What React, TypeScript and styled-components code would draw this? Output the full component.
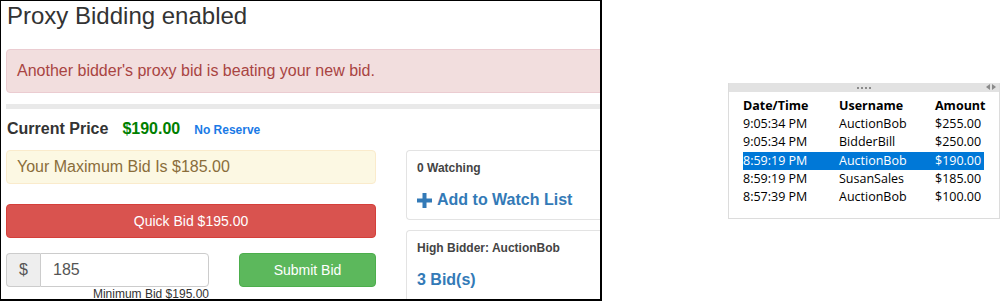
import React, { FC } from 'react';
import styled, { createGlobalStyle } from 'styled-components';

const GlobalStyle = createGlobalStyle`
  html, body {
    margin: 0;
    padding: 0;
    background: #fff;
  }
  body {
    font-family: 'Liberation Sans', Arial, sans-serif;
    color: #333;
  }
`;

interface BidRow {
  time: string;
  user: string;
  amount: string;
  selected?: boolean;
}

const bids: BidRow[] = [
  { time: '9:05:34 PM', user: 'AuctionBob', amount: '$255.00' },
  { time: '9:05:34 PM', user: 'BidderBill', amount: '$250.00' },
  { time: '8:59:19 PM', user: 'AuctionBob', amount: '$190.00', selected: true },
  { time: '8:59:19 PM', user: 'SusanSales', amount: '$185.00' },
  { time: '8:57:39 PM', user: 'AuctionBob', amount: '$100.00' },
];

const Page = styled.div`
  display: flex;
  align-items: flex-start;
  width: 1000px;
  height: 302px;
`;

const Frame = styled.div`
  box-sizing: border-box;
  width: 602px;
  height: 301px;
  border-top: 1px solid #000;
  border-left: 1px solid #000;
  border-right: 2px solid #000;
  border-bottom: 2px solid #000;
  overflow: hidden;
  flex-shrink: 0;
`;

const Inner = styled.div`
  width: 660px;
  padding-left: 5px;
`;

const Title = styled.h1`
  margin: 0;
  padding-top: 1px;
  font-size: 24px;
  font-weight: 400;
  line-height: 28px;
  padding-left: 1px;
  color: #333;
`;

const Alert = styled.div<{ kind: 'danger' | 'warning' }>`
  box-sizing: border-box;
  border: 1px solid ${p => (p.kind === 'danger' ? '#ebccd1' : '#faebcc')};
  background: ${p => (p.kind === 'danger' ? '#f2dede' : '#fcf8e3')};
  color: ${p => (p.kind === 'danger' ? '#a94442' : '#8a6d3b')};
  border-radius: 4px;
  font-size: 16px;
  line-height: 20px;
  padding: 0 10px;
  display: flex;
  align-items: center;
`;

const DangerAlert = styled(Alert)`
  margin-top: 19px;
  height: 44px;
`;

const Divider = styled.div`
  margin-top: 11px;
  height: 5px;
  background: #e9e9e9;
`;

const PriceRow = styled.div`
  display: flex;
  align-items: baseline;
  height: 20px;
  margin-top: 11px;
  padding-left: 1px;
`;

const PriceLabel = styled.span`
  font-size: 16px;
  font-weight: 700;
  color: #333;
`;

const PriceValue = styled.span`
  font-size: 16px;
  font-weight: 700;
  color: #008000;
  margin-left: 14px;
`;

const Reserve = styled.span`
  font-size: 12px;
  font-weight: 700;
  color: #1a7ae6;
  margin-left: 14px;
`;

const Columns = styled.div`
  display: grid;
  grid-template-columns: 370px 1fr;
  column-gap: 30px;
  margin-top: 10px;
`;

const LeftCol = styled.div`
  display: flex;
  flex-direction: column;
`;

const MaxBid = styled(Alert)`
  height: 34px;
`;

const Button = styled.button<{ variant: 'danger' | 'success' }>`
  box-sizing: border-box;
  border: 1px solid ${p => (p.variant === 'danger' ? '#d43f3a' : '#4cae4c')};
  background: ${p => (p.variant === 'danger' ? '#d9534f' : '#5cb85c')};
  color: #fff;
  border-radius: 4px;
  font-family: 'Liberation Sans', Arial, sans-serif;
  font-size: 14px;
  height: 34px;
  padding: 0;
  cursor: pointer;
`;

const QuickBid = styled(Button)`
  margin-top: 20px;
  width: 100%;
`;

const BidForm = styled.div`
  display: grid;
  grid-template-columns: 203px 137px;
  column-gap: 30px;
  margin-top: 15px;
`;

const InputWrap = styled.div`
  display: flex;
  flex-direction: column;
  align-items: flex-end;
`;

const InputGroup = styled.div`
  display: flex;
  width: 100%;
  height: 34px;
  box-sizing: border-box;
`;

const Addon = styled.span`
  box-sizing: border-box;
  width: 34px;
  border: 1px solid #ccc;
  border-right: none;
  border-radius: 4px 0 0 4px;
  background: #eee;
  color: #555;
  font-size: 16px;
  display: flex;
  align-items: center;
  justify-content: center;
`;

const Input = styled.input`
  box-sizing: border-box;
  flex: 1;
  min-width: 0;
  border: 1px solid #ccc;
  border-radius: 0 4px 4px 0;
  padding: 0 12px;
  font-family: 'Liberation Sans', Arial, sans-serif;
  font-size: 16px;
  color: #555;
  outline: none;
`;

const Hint = styled.div`
  font-size: 12px;
  line-height: 14px;
  color: #333;
`;

const RightCol = styled.div`
  display: flex;
  flex-direction: column;
  gap: 10px;
`;

const Panel = styled.div<{ tall?: boolean }>`
  box-sizing: border-box;
  border: 1px solid #e3e3e3;
  border-right: none;
  border-radius: 4px 0 0 4px;
  padding: 10px 10px 0;
  height: ${p => (p.tall ? '90px' : '70px')};
`;

const PanelLabel = styled.div`
  font-size: 12px;
  font-weight: 700;
  color: #444;
  line-height: 14px;
`;

const PanelLink = styled.a`
  display: flex;
  align-items: center;
  gap: 5px;
  margin-top: 15px;
  font-size: 16px;
  font-weight: 700;
  line-height: 20px;
  color: #337ab7;
  text-decoration: none;
`;

const Widget = styled.div`
  margin-left: 126px;
  margin-top: 83px;
  width: 272px;
  box-sizing: border-box;
  border: 1px solid #dcdcdc;
  border-top: none;
  height: 136px;
`;

const WidgetBar = styled.div`
  position: relative;
  height: 9px;
  background: #e2e2e2;
  display: flex;
  align-items: center;
  justify-content: center;
`;

const Dots = styled.div`
  display: flex;
  gap: 2px;
  span {
    width: 2px;
    height: 2px;
    background: #8a8a8a;
  }
`;

const Arrows = styled.div`
  position: absolute;
  right: 3px;
  top: 1px;
  display: flex;
  gap: 2px;
`;

const Table = styled.table`
  margin: 5px 0 0 14px;
  width: 241px;
  table-layout: fixed;
  border-collapse: collapse;
  font-family: 'Open Sans', 'Noto Sans', sans-serif;
  font-size: 12.5px;
  color: #000;
  th, td {
    padding: 0;
    text-align: left;
    height: 18.2px;
    line-height: 18px;
    white-space: nowrap;
    overflow: visible;
  }
  th {
    font-weight: 700;
  }
`;

const Row = styled.tr<{ selected?: boolean }>`
  background: ${p => (p.selected ? '#0078d7' : 'transparent')};
  color: ${p => (p.selected ? '#fff' : '#000')};
`;

const Col = styled.col<{ w: number }>`
  width: ${p => p.w}px;
`;

const PlusIcon: FC = () => (
  <svg width="15" height="15" viewBox="0 0 15 15">
    <path d="M5.5 0h4v5.5H15v4H9.5V15h-4V9.5H0v-4h5.5z" fill="#337ab7" />
  </svg>
);

const App: FC = () => (
  <Page>
    <GlobalStyle />
    <Frame>
      <Inner>
        <Title>Proxy Bidding enabled</Title>
        <DangerAlert kind="danger">Another bidder's proxy bid is beating your new bid.</DangerAlert>
        <Divider />
        <PriceRow>
          <PriceLabel>Current Price</PriceLabel>
          <PriceValue>$190.00</PriceValue>
          <Reserve>No Reserve</Reserve>
        </PriceRow>
        <Columns>
          <LeftCol>
            <MaxBid kind="warning">Your Maximum Bid Is $185.00</MaxBid>
            <QuickBid variant="danger">Quick Bid $195.00</QuickBid>
            <BidForm>
              <InputWrap>
                <InputGroup>
                  <Addon>$</Addon>
                  <Input defaultValue="185" />
                </InputGroup>
                <Hint>Minimum Bid $195.00</Hint>
              </InputWrap>
              <Button variant="success">Submit Bid</Button>
            </BidForm>
          </LeftCol>
          <RightCol>
            <Panel>
              <PanelLabel>0 Watching</PanelLabel>
              <PanelLink href="#">
                <PlusIcon />
                Add to Watch List
              </PanelLink>
            </Panel>
            <Panel tall>
              <PanelLabel>High Bidder: AuctionBob</PanelLabel>
              <PanelLink href="#">3 Bid(s)</PanelLink>
            </Panel>
          </RightCol>
        </Columns>
      </Inner>
    </Frame>
    <Widget>
      <WidgetBar>
        <Dots>
          <span />
          <span />
          <span />
          <span />
        </Dots>
        <Arrows>
          <svg width="4" height="6" viewBox="0 0 4 6">
            <path d="M4 0v6L0 3z" fill="#8a8a8a" />
          </svg>
          <svg width="4" height="6" viewBox="0 0 4 6">
            <path d="M0 0v6l4-3z" fill="#8a8a8a" />
          </svg>
        </Arrows>
      </WidgetBar>
      <Table>
        <colgroup>
          <Col w={96} />
          <Col w={96} />
          <Col w={49} />
        </colgroup>
        <thead>
          <tr>
            <th>Date/Time</th>
            <th>Username</th>
            <th>Amount</th>
          </tr>
        </thead>
        <tbody>
          {bids.map((b, i) => (
            <Row key={i} selected={b.selected}>
              <td>{b.time}</td>
              <td>{b.user}</td>
              <td>{b.amount}</td>
            </Row>
          ))}
        </tbody>
      </Table>
    </Widget>
  </Page>
);

export default App;
